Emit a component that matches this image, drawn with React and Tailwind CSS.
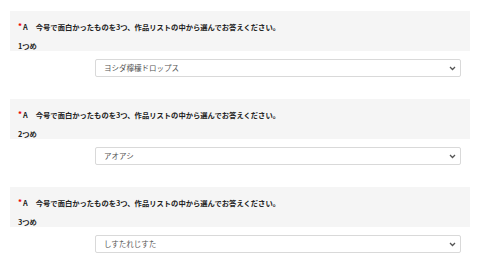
import React from 'react';

const questions = [
  { label: '1つめ', value: 'ヨシダ檸檬ドロップス' },
  { label: '2つめ', value: 'アオアシ' },
  { label: '3つめ', value: 'しすたれじすた' },
];

function Chevron() {
  return (
    <svg width="7" height="5" viewBox="0 0 7 5" className="shrink-0">
      <path d="M1 1 L3.5 3.5 L6 1" fill="none" stroke="#555" strokeWidth="1.3" />
    </svg>
  );
}

export default function App() {
  return (
    <div
      className="w-[480px] h-[266px] bg-white px-[10px] pt-[11px] overflow-hidden"
      style={{ fontFamily: '"Noto Sans CJK JP", "Noto Sans", sans-serif' }}
    >
      {questions.map((q, i) => (
        <div key={i} className={i > 0 ? 'mt-[22px]' : ''}>
          <div className="h-[40px] bg-[#f5f5f5] pl-[8px] pt-[9px]">
            <div className="flex items-start text-[7.3px] font-bold text-[#222] leading-[14px]">
              <span className="text-[#e00] text-[8px] leading-[10px] mt-[1px]">*</span>
              <span className="ml-[1px]">A</span>
              <span className="ml-[8px]">今号で面白かったものを3つ、作品リストの中から選んでお答えください。</span>
            </div>
            <div className="mt-[5px] text-[7.3px] font-bold text-[#222] leading-[14px]">{q.label}</div>
          </div>
          <div className="mt-[8px] pl-[85px] pr-[9px]">
            <div className="h-[18px] border border-[#d9d9d9] rounded-[2px] bg-white flex items-center justify-between pl-[8px] pr-[4px]">
              <span className="text-[7.5px] text-[#555]">{q.value}</span>
              <Chevron />
            </div>
          </div>
        </div>
      ))}
    </div>
  );
}
